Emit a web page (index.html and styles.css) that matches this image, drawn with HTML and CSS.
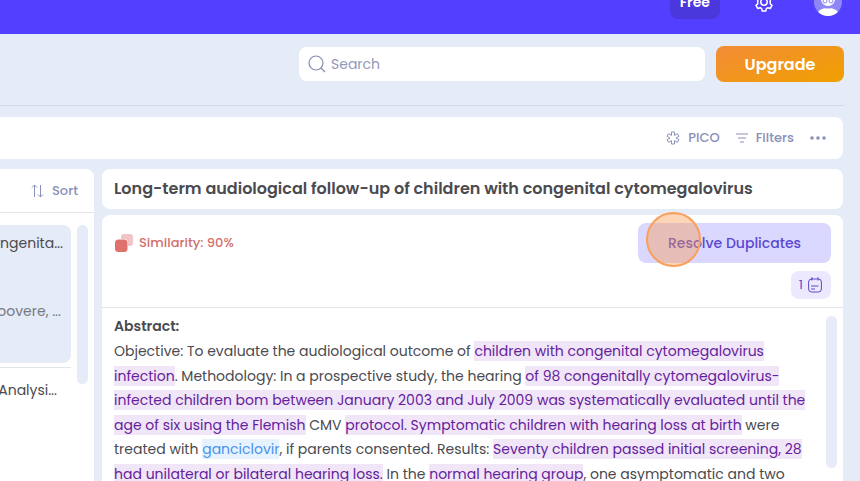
FILE: index.html
```html
<!DOCTYPE html>
<html lang="en">
<head>
    <meta charset="UTF-8">
    <title>Review</title>
    <link rel="stylesheet" href="styles.css">
</head>
<body>
    <header class="topbar">
        <span class="plan">Free</span>
        <button class="icon-btn" aria-label="Settings">
            <svg width="20" height="20" viewBox="0 0 20 20" fill="none" stroke="#fff" stroke-width="1.5" stroke-linejoin="round">
                <path d="M8.2 1h3.6l.5 2.4 1.6.9 2.3-.8L18 6.600l-1.800 1.700v3.400L18 13.400l-1.800 3.100-2.300-.8-1.600.9-.5 2.400H8.200l-.5-2.400-1.600-.9-2.300.8L2 13.400l1.800-1.700V8.300L2 6.600l1.800-3.100 2.300.8 1.600-.9z"/>
                <circle cx="10" cy="10" r="3.200"/>
            </svg>
        </button>
        <button class="icon-btn" aria-label="Account">
            <svg width="28" height="28" viewBox="0 0 28 28">
                <defs><clipPath id="round"><circle cx="14" cy="14" r="14"/></clipPath></defs>
                <g clip-path="url(#round)">
                    <rect width="28" height="28" fill="#8f86f5"/>
                    <ellipse cx="14" cy="25" rx="10" ry="5" fill="#fff"/>
                    <circle cx="14" cy="11" r="7" fill="#fff"/>
                    <circle cx="11" cy="13" r="2" fill="none" stroke="#8f86f5"/>
                    <circle cx="17" cy="13" r="2" fill="none" stroke="#8f86f5"/>
                    <path d="M9 18.500q5 3 10 0" fill="none" stroke="#8f86f5" stroke-width="1.200"/>
                </g>
            </svg>
        </button>
    </header>

    <div class="search-row">
        <label class="search">
            <svg width="18" height="18" viewBox="0 0 18 18" fill="none" stroke="#868cac" stroke-width="1.200">
                <circle cx="8" cy="8" r="7"/>
                <path d="M13 13l4 4"/>
            </svg>
            <input type="text" placeholder="Search" aria-label="Search">
        </label>
        <button class="upgrade">Upgrade</button>
    </div>

    <nav class="toolbar">
        <button class="tool">
            <svg width="14" height="14" viewBox="0 0 14 14" fill="none" stroke="#8b90b8" stroke-linejoin="round">
                <path d="M5.500 1h3v3.400l2.900-1.700 1.500 2.600L10 7l2.900 1.700-1.500 2.600-2.900-1.700V13h-3V9.600l-2.900 1.700-1.500-2.600L4 7 1.100 5.300l1.500-2.600 2.900 1.700z"/>
            </svg>
            PICO
        </button>
        <button class="tool">
            <svg width="12" height="10" viewBox="0 0 12 10" stroke="#8b90b8" stroke-width="1.100">
                <path d="M0 1h12M2 5h8M4 9h4"/>
            </svg>
            Filters
        </button>
        <button class="tool more" aria-label="More">
            <svg width="16" height="4" viewBox="0 0 16 4" fill="#8b90b8">
                <circle cx="2" cy="2" r="1.800"/><circle cx="8" cy="2" r="1.800"/><circle cx="14" cy="2" r="1.800"/>
            </svg>
        </button>
    </nav>

    <main class="content">
        <aside class="list">
            <div class="list-head">
                <button class="tool">
                    <svg width="13" height="14" viewBox="0 0 13 14" fill="none" stroke="#8b90b8">
                        <path d="M3.500 13V1M1 3.500L3.500 1 6 3.500M9.500 1v12M7 10.500L9.500 13l2.500-2.500"/>
                    </svg>
                    Sort
                </button>
            </div>
            <div class="list-body">
                <div class="items">
                    <div class="item active">
                        <p class="item-title">ongenita...</p>
                        <p class="item-authors">oovere, ...</p>
                    </div>
                    <div class="item">
                        <p class="item-title">Analysi...</p>
                    </div>
                </div>
                <div class="scroll"></div>
            </div>
        </aside>

        <section class="article">
            <h1 class="title">Long-term audiological follow-up of children with congenital cytomegalovirus</h1>
            <div class="detail">
                <div class="detail-head">
                    <div class="similarity">
                        <svg width="18" height="18" viewBox="0 0 18 18">
                            <rect x="6" width="12" height="12" rx="3" fill="#f1c5c8"/>
                            <rect y="5" width="13" height="13" rx="4" fill="#fff"/>
                            <rect y="5.500" width="12.500" height="12.500" rx="3.500" fill="#df716c"/>
                        </svg>
                        Similarity: 90%
                    </div>
                    <div class="actions">
                        <button class="resolve">Resolve Duplicates<span class="pointer"></span></button>
                        <button class="notes">
                            1
                            <svg width="14" height="16" viewBox="0 0 14 16" fill="none" stroke="#5a48c8" stroke-linecap="round">
                                <rect x=".6" y="2" width="12.800" height="13" rx="3"/>
                                <path d="M4 .6v2.600M10 .6v2.600M3.500 9h6.500M3.500 12h3"/>
                            </svg>
                        </button>
                    </div>
                </div>
                <div class="detail-body">
                    <div class="abstract">
                        <h2>Abstract:</h2>
                        <p>
                            Objective: To evaluate the audiological outcome of <mark>children with congenital cytomegalovirus</mark><br>
                            <mark>infection</mark>. Methodology: In a prospective study, the hearing <mark>of 98 congenitally cytomegalovirus-</mark><br>
                            <mark>infected children bom between January 2003 and July 2009 was systematically evaluated until the</mark><br>
                            <mark>age of six using the Flemish</mark> CMV <mark>protocol. Symptomatic children with hearing loss at birth</mark> were<br>
                            treated with <mark class="drug">ganciclovir</mark>, if parents consented. Results: <mark>Seventy children passed initial screening, 28</mark><br>
                            <mark>had unilateral or bilateral hearing loss.</mark> In the <mark>normal hearing group</mark>, one asymptomatic and two
                        </p>
                    </div>
                    <div class="scroll"></div>
                </div>
            </div>
        </section>
    </main>
</body>
</html>
```
FILE: styles.css
```css
* {
    margin: 0;
    padding: 0;
    box-sizing: border-box;
}
body {
    height: 100vh;
    overflow: hidden;
    display: flex;
    flex-direction: column;
    background: #e5ebf7;
    color: #4a4a4f;
    font-family: Poppins, Inter, sans-serif;
    font-size: 14px;
}
button {
    border: 0;
    background: none;
    font: inherit;
    color: inherit;
    cursor: pointer;
}
svg {
    display: block;
    flex: none;
}

/* top bar */
.topbar {
    flex: none;
    display: flex;
    align-items: center;
    justify-content: flex-end;
    gap: 34px;
    height: 64px;
    margin-top: -30px;
    padding-right: 18px;
    background: #523fff;
}
.plan {
    padding: 0 10px;
    border-radius: 8px;
    background: #4a38dd;
    color: #fff;
    font-weight: 600;
    line-height: 34px;
}
.icon-btn + .icon-btn {
    margin-left: 6px;
}

/* search */
.search-row {
    flex: none;
    display: flex;
    align-items: center;
    gap: 11px;
    margin-right: 16px;
    padding: 12px 0 23px 299px;
    border-bottom: 1px solid #d3d9e7;
}
.search {
    flex: 1;
    display: flex;
    align-items: center;
    gap: 5px;
    height: 34px;
    padding: 0 9px;
    border-radius: 8px;
    background: #fff;
}
.search input {
    flex: 1;
    min-width: 0;
    border: 0;
    outline: 0;
    font: inherit;
    background: none;
}
.search input::placeholder {
    color: #9298b8;
}
.upgrade {
    width: 128px;
    height: 36px;
    border-radius: 8px;
    background: linear-gradient(160deg, #f28c38, #f0a000);
    color: #fff;
    font-size: 16px;
    font-weight: 600;
}

/* toolbar */
.toolbar {
    flex: none;
    display: flex;
    align-items: center;
    justify-content: flex-end;
    gap: 16px;
    height: 42px;
    margin: 11px 17px 10px 0;
    padding-right: 17px;
    border-radius: 0 8px 8px 0;
    background: #fff;
}
.tool {
    display: flex;
    align-items: center;
    gap: 8px;
    color: #8b90b8;
    font-size: 13px;
    font-weight: 500;
}

.content {
    flex: 1;
    min-height: 0;
    display: flex;
    gap: 8px;
    margin-right: 17px;
}

/* left list */
.list {
    flex: 0 0 94px;
    border-radius: 0 8px 0 0;
    background: #fff;
    overflow: hidden;
}
.list-head {
    display: flex;
    justify-content: flex-end;
    height: 44px;
    padding-right: 16px;
    border-bottom: 1px solid #e3e5ea;
}
.list-body {
    display: flex;
    gap: 6px;
    padding: 12px 6px 0 0;
}
.items {
    flex: 1;
    min-width: 0;
}
.item {
    display: flex;
    flex-direction: column;
    align-items: flex-end;
    gap: 48px;
    padding: 12px 14px;
    line-height: 20px;
    white-space: nowrap;
}
.item.active {
    height: 138px;
    padding: 8px 8px;
    border-radius: 0 8px 8px 0;
    background: #e5ebf7;
}
.item.active + .item {
    margin-top: 4px;
    border-top: 1px solid #e3e5ea;
}
.item-authors {
    padding-right: 2px;
    color: #77797f;
}
.scroll {
    flex: none;
    width: 11px;
    border-radius: 6px;
    background: #e5ebf7;
}
.list .scroll {
    height: 159px;
}

/* article */
.article {
    flex: 1;
    min-width: 0;
    display: flex;
    flex-direction: column;
    gap: 6px;
}
.title {
    padding: 0 12px;
    border-radius: 8px;
    background: #fff;
    font-size: 16px;
    font-weight: 600;
    line-height: 40px;
    white-space: nowrap;
}
.detail {
    flex: 1;
    min-height: 0;
    display: flex;
    flex-direction: column;
    border-radius: 8px 8px 0 0;
    background: #fff;
}
.detail-head {
    display: flex;
    justify-content: space-between;
    padding: 8px 12px 8px 13px;
    border-bottom: 1px solid #e3e5ea;
}
.similarity {
    display: flex;
    align-items: center;
    gap: 6px;
    height: 40px;
    color: #d2706d;
    font-size: 13px;
    font-weight: 500;
}
.actions {
    display: flex;
    flex-direction: column;
    align-items: flex-end;
    gap: 8px;
}
.resolve {
    position: relative;
    width: 193px;
    height: 40px;
    border-radius: 8px;
    background: #dbd8ff;
    color: #5a48d0;
    font-weight: 500;
}
/* click highlight */
.pointer {
    position: absolute;
    top: -11px;
    left: 8px;
    width: 55px;
    height: 55px;
    border: 2px solid #f9a05a;
    border-radius: 50%;
    background: rgba(248, 153, 75, .4);
}
.notes {
    display: flex;
    align-items: center;
    gap: 5px;
    height: 28px;
    padding: 0 9px 0 8px;
    border-radius: 8px;
    background: #ece9ff;
    color: #5a48c8;
    font-size: 13px;
}
.detail-body {
    flex: 1;
    min-height: 0;
    display: flex;
    justify-content: space-between;
    padding: 8px 6px 13px 12px;
}
.abstract {
    line-height: 1.75;
    white-space: nowrap;
}
.abstract h2 {
    margin-bottom: 2px;
    font-size: 14px;
    font-weight: 600;
    line-height: 21px;
}
mark {
    background: #f0e6f8;
    color: #65219c;
}
mark.drug {
    background: #e6f3ff;
    color: #4a90ee;
}
```
